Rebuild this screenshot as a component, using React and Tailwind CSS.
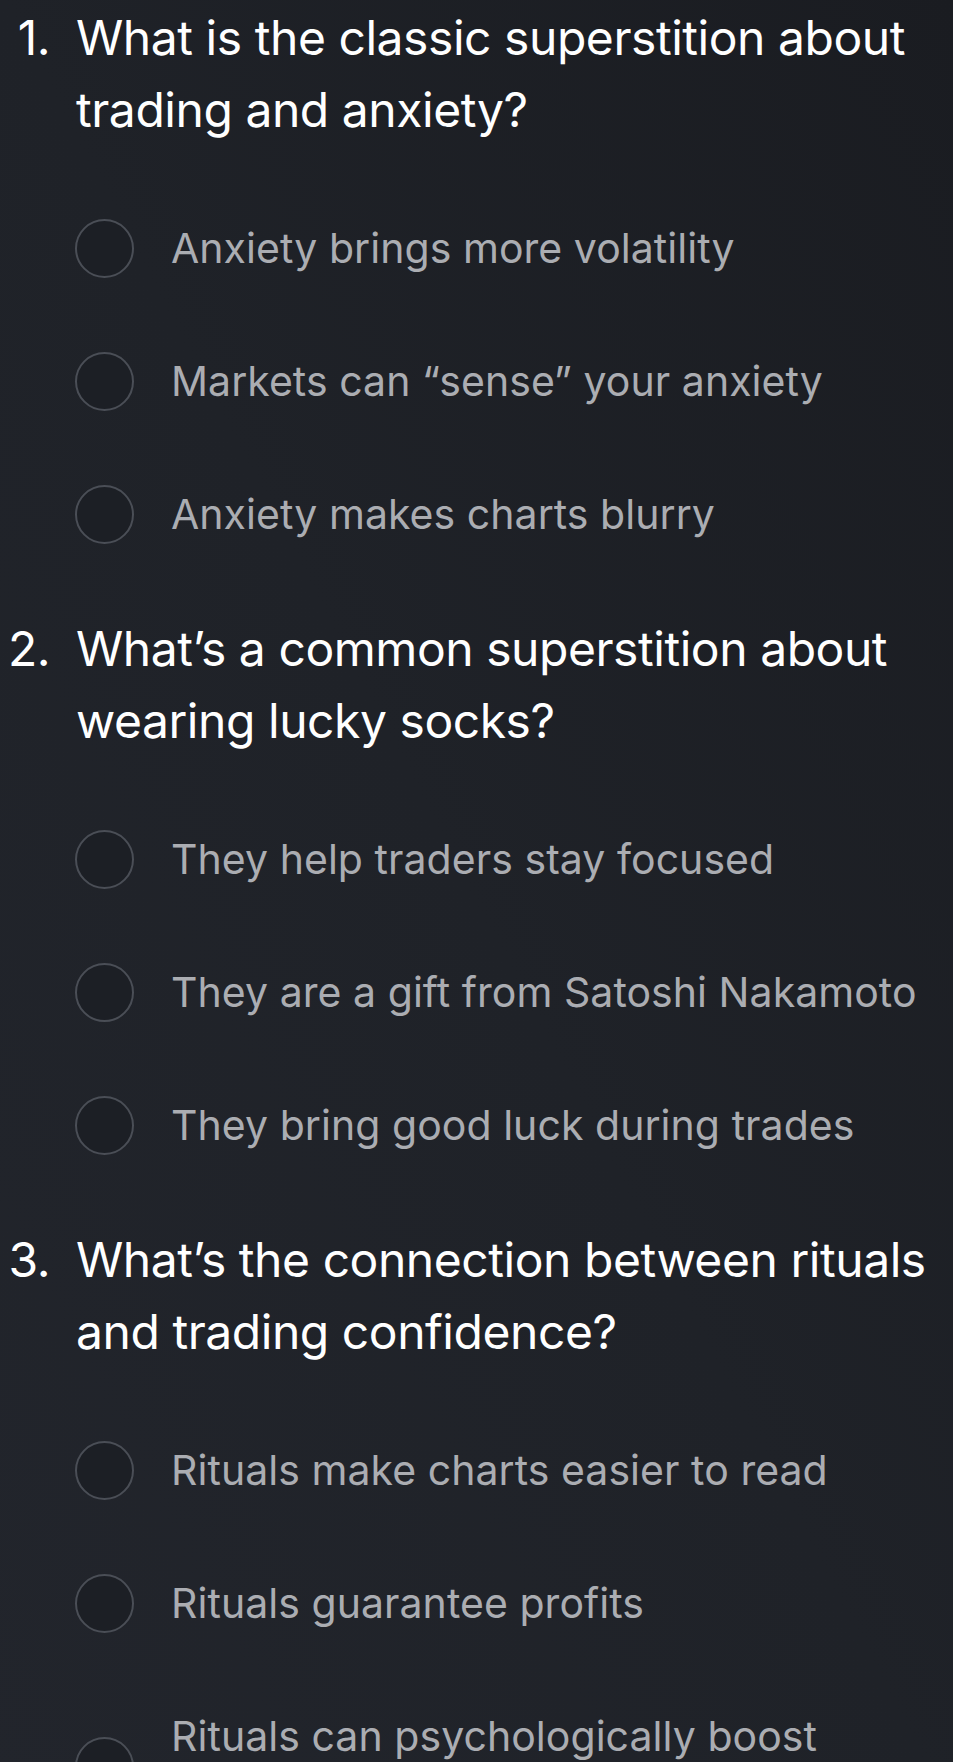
import React from 'react'

const quiz = [
  {
    q: 'What is the classic superstition about trading and anxiety?',
    options: [
      'Anxiety brings more volatility',
      'Markets can “sense” your anxiety',
      'Anxiety makes charts blurry',
    ],
  },
  {
    q: 'What’s a common superstition about wearing lucky socks?',
    options: [
      'They help traders stay focused',
      'They are a gift from Satoshi Nakamoto',
      'They bring good luck during trades',
    ],
  },
  {
    q: 'What’s the connection between rituals and trading confidence?',
    options: [
      'Rituals make charts easier to read',
      'Rituals guarantee profits',
      'Rituals can psychologically boost confidence',
    ],
  },
]

function Option({ label }) {
  return (
    <label className="flex items-center gap-[37px] cursor-pointer">
      <input type="radio" className="sr-only" />
      <span className="shrink-0 w-[59px] h-[59px] rounded-full border-2 border-[#4a4e56] bg-[#1c1f25]" />
      <span className="text-[41px] leading-[60px] tracking-[0.05px] text-[#abadb2]">{label}</span>
    </label>
  )
}

export default function App() {
  return (
    <div
      className="min-h-[1762px] w-full overflow-hidden bg-gradient-to-tr from-[#22252c] via-[#1f2228] to-[#1a1c21] text-white"
      style={{ fontFamily: 'Inter, "Noto Sans", sans-serif' }}
    >
      <div className="flex flex-col gap-[69px] pt-[2px] pr-[12px]">
        {quiz.map((item, i) => (
          <div key={i} className="flex">
            <div className="w-[50px] shrink-0 text-right text-[48px] leading-[72px] tracking-[-0.5px] text-white">
              {i + 1}.
            </div>
            <div className="flex-1 pl-[26px]">
              <h2 className="text-[48px] leading-[72px] tracking-[-0.45px] font-normal text-white">{item.q}</h2>
              <div className="mt-[72px] flex flex-col gap-[73px] -ml-[1px]">
                {item.options.map((o) => (
                  <Option key={o} label={o} />
                ))}
              </div>
            </div>
          </div>
        ))}
      </div>
    </div>
  )
}
